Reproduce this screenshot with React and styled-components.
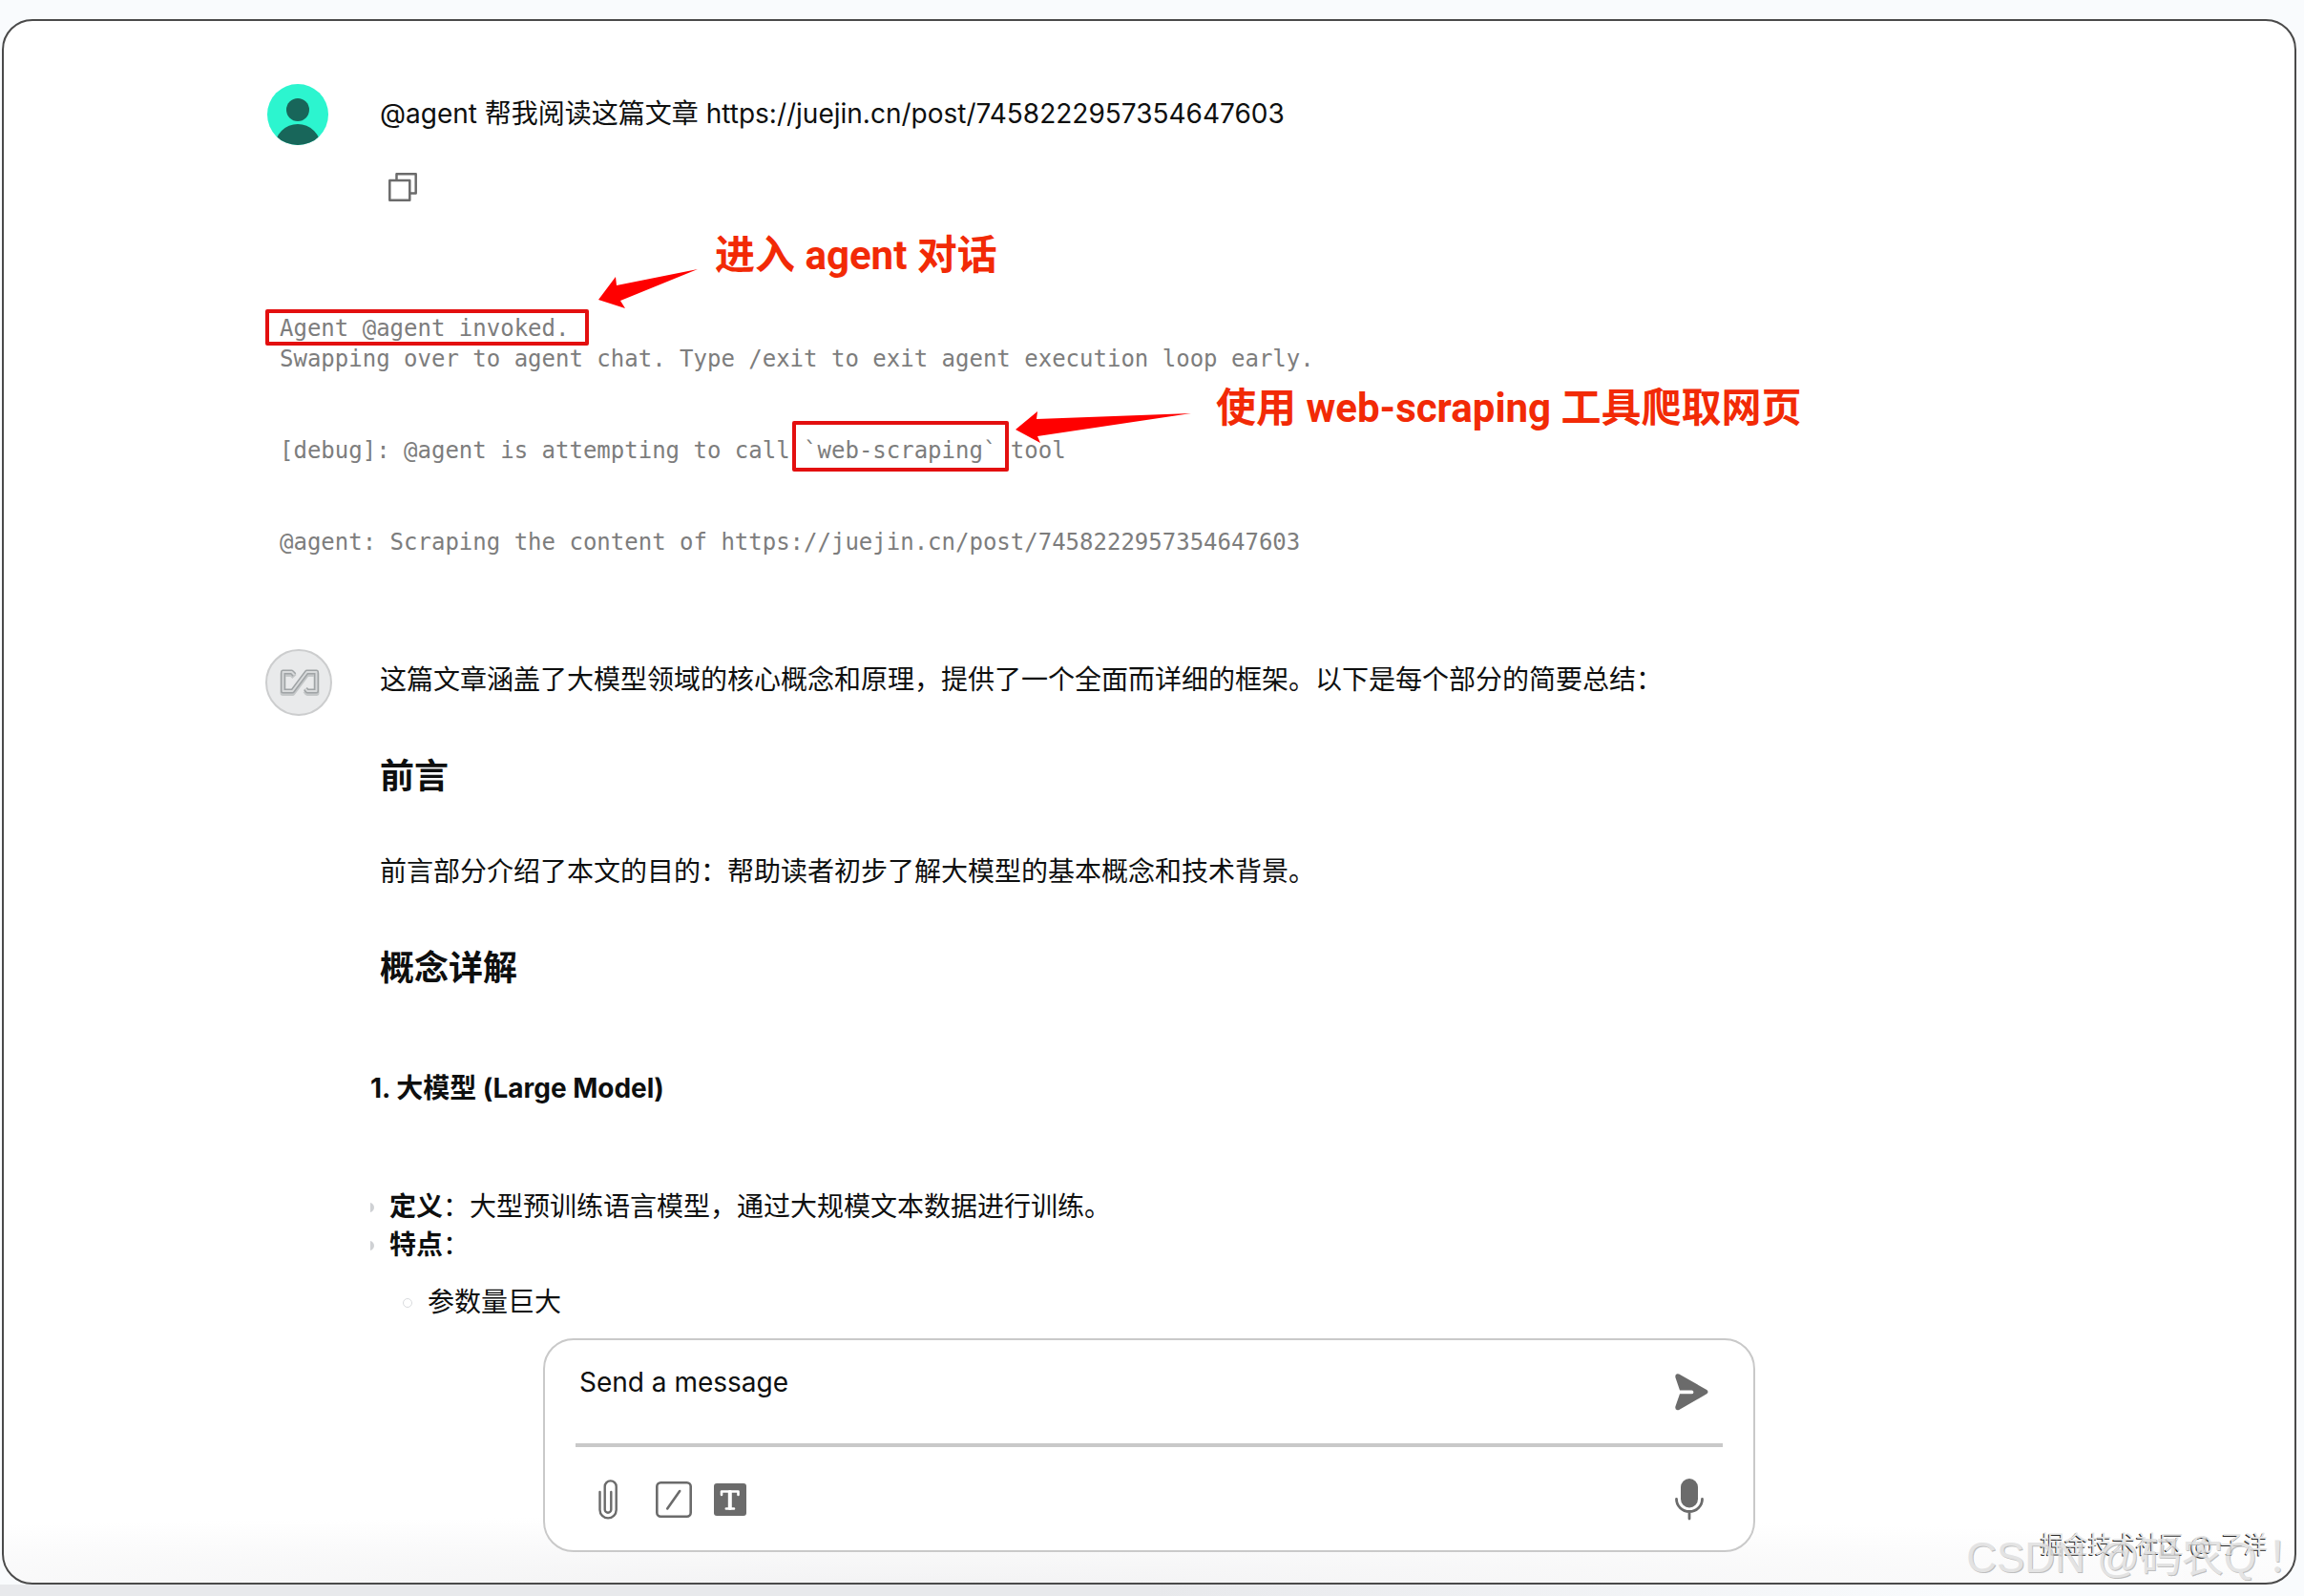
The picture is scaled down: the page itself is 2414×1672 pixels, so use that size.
import styled, { createGlobalStyle } from 'styled-components'

const GlobalStyle = createGlobalStyle`
    *, *::before, *::after {
        box-sizing: border-box;
    }
    body {
        margin: 0;
        color: #0e0f0f;
        font: 28px/40px Inter, "Noto Sans CJK SC", sans-serif;
    }
    h2, h3, p, ul, ol {
        margin: 0;
        padding: 0;
    }
`

const Page = styled.div`
    display: flex;
    min-height: 100vh;
    padding: 20px 8px 12px 2px;
    background: linear-gradient(to right, #e8e9ec 50%, #f9fbfd 85%) bottom / 100% 12px no-repeat #f9fbfd;
`

const Panel = styled.main`
    position: relative;
    flex: 1;
    min-width: 0;
    display: flex;
    flex-direction: column;
    justify-content: space-between;
    border: 2px solid #4a4a4a;
    border-radius: 32px;
    overflow: hidden;
    background: radial-gradient(ellipse 80% 70px at 40% 100%, #f3f3f4, #ffffff);
`

const History = styled.div`
    width: 100%;
    max-width: 1852px;
    margin: 0 auto;
    padding-top: 66px;
`

const Message = styled.article`
    display: flex;
    align-items: flex-start;
`

const Avatar = styled.div`
    flex: none;
    width: 110px;
    padding-left: ${({ $inset }) => $inset || '0'};
    svg {
        display: block;
    }
`

const UserBody = styled.div`
    padding: 11px 0 0 10px;
`

const IconButton = styled.button`
    display: flex;
    padding: 0;
    border: 0;
    background: none;
    color: #6b6b6b;
    cursor: pointer;
`

const CopyButton = styled(IconButton)`
    margin: 42px 0 0 9px;
`

const Log = styled.div`
    position: relative;
    display: flex;
    flex-direction: column;
    gap: 64px;
    margin: 117px 0 96px;
    padding-left: 15px;
    color: #7d7d7d;
    font: 24px/32px "DejaVu Sans Mono", monospace;
`

const Highlight = styled.span`
    position: relative;
    display: inline-block;
    &::after {
        content: '';
        position: absolute;
        inset: ${({ $inset }) => $inset};
        border: 4px solid #e30f0f;
        border-radius: 2px;
    }
`

const Note = styled.div`
    position: absolute;
    top: ${({ $top }) => $top};
    left: ${({ $left }) => $left};
    display: flex;
    align-items: flex-start;
    gap: ${({ $gap }) => $gap};
    color: #f22a06;
    font: 700 42px/56px Roboto, "Noto Sans CJK SC", sans-serif;
    white-space: nowrap;
    svg {
        flex: none;
        margin-top: ${({ $drop }) => $drop};
    }
`

const Answer = styled.div`
    flex: 1;
    min-width: 0;
    padding: 12px 0 0 10px;
    overflow: hidden;
`

const Heading = styled.h2`
    margin: 59px 0 58px;
    font-size: 36px;
    line-height: 44px;
    font-weight: 700;
`

const Topic = styled.h3`
    margin: 84px 0;
    font-size: 28px;
    line-height: 40px;
    font-weight: 700;
    text-indent: -10px;
`

const Points = styled.ul`
    padding-left: 10px;
    list-style: none;
    > li {
        position: relative;
    }
    > li::before {
        content: '';
        position: absolute;
        left: -26px;
        top: 16px;
        width: 10px;
        height: 10px;
        border-radius: 50%;
        background: #cfd1d4;
    }
`

const SubPoints = styled(Points)`
    padding: 20px 0 0 40px;
    > li::before {
        border: 1px solid #d9dbde;
        background: none;
    }
`

const Composer = styled.form`
    width: calc(100% - 64px);
    max-width: 1270px;
    margin: 16px auto 32px;
    padding: 24px 32px 31px;
    border: 2px solid #c9c9c9;
    border-radius: 32px;
    background: #ffffff;
`

const InputRow = styled.div`
    display: flex;
    align-items: flex-start;
    justify-content: space-between;
    height: 88px;
    padding: 0 14px 0 4px;
    border-bottom: 4px solid #c9c9c9;
    button {
        margin-top: 11px;
    }
`

const MessageInput = styled.textarea`
    flex: 1;
    height: 40px;
    padding: 0;
    border: 0;
    outline: 0;
    resize: none;
    overflow: hidden;
    background: none;
    color: inherit;
    font: inherit;
    &::placeholder {
        color: #0e0f0f;
        opacity: 1;
    }
`

const Tools = styled.div`
    display: flex;
    align-items: center;
    padding: 33px 20px 0 24px;
    button:nth-child(2) {
        margin-left: 40px;
    }
    button:nth-child(3) {
        margin-left: 23px;
    }
    button:last-child {
        margin-left: auto;
    }
`

const SiteMark = styled.span`
    position: absolute;
    right: 28px;
    bottom: 24px;
    color: #e6e6e6;
    font-size: 25px;
    line-height: 32px;
    text-shadow: -1px 1px 0 #2b2b2b;
`

const AuthorMark = styled.span`
    position: absolute;
    right: -4px;
    bottom: 0;
    color: #dedede;
    font: 44px/52px "Liberation Sans", "Noto Sans CJK TC", sans-serif;
    text-shadow: 1px 1px 0 #b0b0b0;
    opacity: .8;
`

function UserAvatar() {
    return (
        <svg width="64" height="64" viewBox="0 0 64 64">
            <clipPath id="user-circle">
                <circle cx="32" cy="32" r="32" />
            </clipPath>
            <g clipPath="url(#user-circle)">
                <rect width="64" height="64" fill="#2cf5cf" />
                <circle cx="32" cy="27" r="12" fill="#18665a" />
                <circle cx="32" cy="66" r="24" fill="#18665a" />
            </g>
        </svg>
    )
}

function BotAvatar() {
    const mark = 'M30.500 27 L27.500 24 H18.500 V44 H28.500 L43.500 24 H53.500 V44 H44 L42 41.500'
    return (
        <svg width="70" height="70" viewBox="0 0 70 70" fill="none" strokeLinejoin="round">
            <circle cx="35" cy="35" r="34" fill="#e9eaeb" stroke="#cccdce" strokeWidth="2" />
            <path d={mark} stroke="#c4c7c8" strokeWidth="6" transform="translate(0 2)" />
            <path d={mark} stroke="#a0a4a6" strokeWidth="5" />
            <path d={mark} stroke="#d8dadb" strokeWidth="2" />
        </svg>
    )
}

function CopyIcon() {
    return (
        <svg width="30" height="30" viewBox="0 0 30 30" fill="none" stroke="currentColor" strokeWidth="2.5" strokeLinejoin="round">
            <path d="M8.500 7.500V1.300H28.700V21.500H22.500" />
            <rect x="1.300" y="8" width="21" height="20.700" />
        </svg>
    )
}

function SendIcon() {
    return (
        <svg width="36" height="39" viewBox="0 0 36 39" fill="currentColor">
            <path d="M.4 4Q-.3 -.8 4.200 .6L33.200 17Q35.800 19.200 33.200 21.300L4.200 38Q-.4 39.200 .4 34.500L5 21.300H17.500a1.900 1.900 0 0 0 0-3.800H5Z" />
        </svg>
    )
}

function ClipIcon() {
    return (
        <svg width="20" height="42" viewBox="0 0 20 42" fill="none" stroke="currentColor" strokeWidth="2.400" strokeLinecap="round">
            <path d="M1.500 13V31.800a8.600 8.600 0 0 0 17.200 0V7.400a6 6 0 0 0-12 0V31.400a3.300 3.300 0 0 0 6.600 0V13" />
        </svg>
    )
}

function SlashIcon() {
    return (
        <svg width="38" height="38" viewBox="0 0 38 38" fill="none" stroke="currentColor" strokeWidth="2.600" strokeLinecap="round">
            <rect x="1.300" y="1.300" width="35.400" height="35.400" rx="4" />
            <path d="M12.200 28.400L25.200 10" />
        </svg>
    )
}

function TextSizeIcon() {
    return (
        <svg width="34" height="34" viewBox="0 0 34 34" fill="none" stroke="#ffffff" strokeLinecap="round" strokeLinejoin="round">
            <rect width="34" height="34" rx="3" fill="#6b6b6b" stroke="none" />
            <path d="M8 12V8.500H25.500V12M12.800 26.500H21" strokeWidth="2.600" />
            <path d="M16.800 9V26" strokeWidth="4" />
        </svg>
    )
}

function MicIcon() {
    return (
        <svg width="30" height="44" viewBox="0 0 30 44" fill="none" stroke="currentColor" strokeWidth="2.800" strokeLinecap="round">
            <rect x="6" y="0" width="18" height="30.500" rx="9" fill="currentColor" stroke="none" />
            <path d="M1.500 21.500a13.500 13 0 0 0 27 0M15 34.500V42" />
        </svg>
    )
}

function App() {
    return (
        <>
            <GlobalStyle />
            <Page>
                <Panel>
                    <History>
                        <Message>
                            <Avatar $inset="2px"><UserAvatar /></Avatar>
                            <UserBody>
                                <p>@agent 帮我阅读这篇文章 https://juejin.cn/post/7458222957354647603</p>
                                <CopyButton type="button" aria-label="Copy"><CopyIcon /></CopyButton>
                            </UserBody>
                        </Message>

                        <Log>
                            <p>
                                <Highlight $inset="-4px -21px -2px -15px">Agent @agent invoked.</Highlight>
                                <br />
                                Swapping over to agent chat. Type /exit to exit agent execution loop early.
                            </p>
                            <p>
                                [debug]: @agent is attempting to call{' '}
                                <Highlight $inset="-15px -13px -6px -12px">`web-scraping`</Highlight> tool
                            </p>
                            <p>@agent: Scraping the content of https://juejin.cn/post/7458222957354647603</p>
                            <Note $top="-88px" $left="349px" $gap="18px" $drop="42px">
                                <svg width="104" height="42" viewBox="0 0 104 42" fill="#ff0000">
                                    <path d="M0 32L18 8L19 17L104 0L23 33L28 41Z" />
                                </svg>
                                进入 agent 对话
                            </Note>
                            <Note $top="72px" $left="786px" $gap="26px" $drop="31px">
                                <svg width="184" height="34" viewBox="0 0 184 34" fill="#ff0000">
                                    <path d="M0 19L23 0L22 8L184 2L23 26L26 33Z" />
                                </svg>
                                使用 web-scraping 工具爬取网页
                            </Note>
                        </Log>

                        <Message>
                            <Avatar><BotAvatar /></Avatar>
                            <Answer>
                                <p>这篇文章涵盖了大模型领域的核心概念和原理，提供了一个全面而详细的框架。以下是每个部分的简要总结：</p>
                                <Heading>前言</Heading>
                                <p>前言部分介绍了本文的目的：帮助读者初步了解大模型的基本概念和技术背景。</p>
                                <Heading>概念详解</Heading>
                                <Topic>1. 大模型 (Large Model)</Topic>
                                <Points>
                                    <li><strong>定义</strong>：大型预训练语言模型，通过大规模文本数据进行训练。</li>
                                    <li>
                                        <strong>特点</strong>：
                                        <SubPoints>
                                            <li>参数量巨大</li>
                                        </SubPoints>
                                    </li>
                                </Points>
                            </Answer>
                        </Message>
                    </History>

                    <Composer onSubmit={(event) => event.preventDefault()}>
                        <InputRow>
                            <MessageInput rows={1} aria-label="Message" placeholder="Send a message" />
                            <IconButton type="submit" aria-label="Send"><SendIcon /></IconButton>
                        </InputRow>
                        <Tools>
                            <IconButton type="button" aria-label="Attach a file"><ClipIcon /></IconButton>
                            <IconButton type="button" aria-label="Slash commands"><SlashIcon /></IconButton>
                            <IconButton type="button" aria-label="Text size"><TextSizeIcon /></IconButton>
                            <IconButton type="button" aria-label="Voice input"><MicIcon /></IconButton>
                        </Tools>
                    </Composer>

                    <SiteMark>掘金技术社区 @ 子洋</SiteMark>
                    <AuthorMark>CSDN @码农Q！</AuthorMark>
                </Panel>
            </Page>
        </>
    )
}

export default App
